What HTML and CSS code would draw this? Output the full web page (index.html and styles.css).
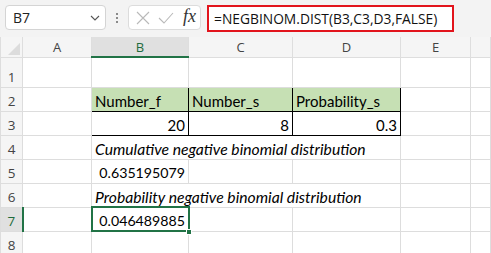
FILE: index.html
```html
<!DOCTYPE html>
<html lang="en">
<head>
    <meta charset="UTF-8">
    <title>NEGBINOM.DIST</title>
    <link rel="stylesheet" href="styles.css">
</head>
<body>
    <div class="formula-bar">
        <div class="name-box">
            <span class="cell-ref">B7</span>
            <svg class="chevron" width="10" height="6" viewBox="0 0 10 6"><path d="M1 1 L5 5 L9 1" fill="none" stroke="#555" stroke-width="1.1"/></svg>
        </div>
        <div class="dots"><i></i><i></i><i></i></div>
        <div class="fx-box">
            <svg width="14" height="14" viewBox="0 0 14 14"><path d="M1 1 L13 13 M13 1 L1 13" stroke="#b9b9b9" stroke-width="1.1"/></svg>
            <svg width="16" height="14" viewBox="0 0 16 14"><path d="M1 7 L6 12 L15 2" fill="none" stroke="#b9b9b9" stroke-width="1.1"/></svg>
            <span class="fx">fx</span>
        </div>
        <div class="formula">=NEGBINOM.DIST(B3,C3,D3,FALSE)</div>
    </div>

    <table class="sheet">
        <colgroup>
            <col style="width:22px"><col style="width:69px"><col style="width:97px">
            <col style="width:104px"><col style="width:108px"><col style="width:70px"><col>
        </colgroup>
        <tr class="col-head">
            <th class="corner"><span class="tri"></span></th>
            <th>A</th><th class="active">B</th><th>C</th><th>D</th><th>E</th><th></th>
        </tr>
        <tr class="tall">
            <th class="row-head">1</th><td></td><td></td><td></td><td></td><td></td><td></td>
        </tr>
        <tr>
            <th class="row-head">2</th><td></td>
            <td class="box head">Number_f</td><td class="box head">Number_s</td><td class="box head">Probability_s</td>
            <td></td><td></td>
        </tr>
        <tr>
            <th class="row-head">3</th><td></td>
            <td class="box num">20</td><td class="box num">8</td><td class="box num">0.3</td>
            <td></td><td></td>
        </tr>
        <tr>
            <th class="row-head">4</th><td></td>
            <td colspan="3" class="note">Cumulative negative binomial distribution</td>
            <td></td><td></td>
        </tr>
        <tr>
            <th class="row-head">5</th><td></td><td class="num result">0.635195079</td><td></td><td></td><td></td><td></td>
        </tr>
        <tr>
            <th class="row-head">6</th><td></td>
            <td colspan="3" class="note">Probability negative binomial distribution</td>
            <td></td><td></td>
        </tr>
        <tr>
            <th class="row-head active">7</th><td></td>
            <td class="num result selected">0.046489885<span class="handle"></span></td>
            <td></td><td></td><td></td><td></td>
        </tr>
        <tr>
            <th class="row-head">8</th><td></td><td></td><td></td><td></td><td></td><td></td>
        </tr>
    </table>
</body>
</html>
```

FILE: styles.css
```css
* {
    margin: 0;
    padding: 0;
    box-sizing: border-box;
}

body {
    width: 491px;
    height: 253px;
    overflow: hidden;
    background: #ffffff;
    font-family: 'Lato', 'Liberation Sans', sans-serif;
    color: #000000;
}

/* formula bar */
.formula-bar {
    height: 37px;
    background: #f3f3f3;
    display: flex;
    align-items: flex-start;
    padding: 5px 0 0 5px;
}

.name-box {
    width: 101px;
    height: 25px;
    background: #fff;
    border: 1px solid #d4d4d4;
    border-radius: 4px;
    display: flex;
    align-items: center;
    justify-content: space-between;
    padding: 0 5px 0 7px;
    font-family: 'Open Sans', sans-serif;
    font-size: 14px;
    color: #222;
}

.dots {
    width: 22px;
    height: 25px;
    display: flex;
    flex-direction: column;
    align-items: center;
    justify-content: center;
    gap: 2px;
}

.dots i {
    width: 2px;
    height: 2px;
    background: #8a8a8a;
}

.fx-box {
    width: 73px;
    height: 25px;
    background: #fff;
    border: 1px solid #dcdcdc;
    border-radius: 4px;
    display: flex;
    align-items: center;
    gap: 8px;
    padding-left: 7px;
}

.fx {
    font-family: 'Liberation Serif', serif;
    font-style: italic;
    font-size: 18px;
    color: #333;
    margin-left: 1px;
    margin-top: -2px;
}

.formula {
    margin-left: 6px;
    width: 247px;
    height: 27px;
    border: 2px solid #e2141c;
    background: #fff;
    font-family: 'Open Sans', sans-serif;
    font-size: 13.8px;
    line-height: 23px;
    padding-left: 5px;
    color: #111;
    white-space: nowrap;
}

/* grid */
.sheet {
    border-collapse: collapse;
    table-layout: fixed;
    width: 491px;
    font-size: 15px;
}

.sheet td,
.sheet th {
    border: 1px solid #dddddd;
    height: 24px;
    padding: 0 3px;
    white-space: nowrap;
    overflow: visible;
}

.col-head th {
    height: 20px;
    background: #f5f5f5;
    font-family: 'Open Sans', sans-serif;
    font-weight: normal;
    font-size: 13px;
    color: #444;
    border-top: none;
    border-color: #dedede;
}

.col-head th.active {
    background: #e0e0e0;
    color: #1e6b3c;
    border-bottom: 2px solid #217346;
}

.corner {
    position: relative;
}

.tri {
    position: absolute;
    right: 2px;
    bottom: 2px;
    width: 0;
    height: 0;
    border-left: 12px solid transparent;
    border-bottom: 12px solid #dcdcdc;
}

.tall td,
.tall th {
    height: 30px;
}

.row-head {
    background: #f5f5f5;
    font-family: 'Open Sans', sans-serif;
    font-weight: normal;
    font-size: 13.5px;
    color: #444;
    text-align: center;
    padding: 0 !important;
    vertical-align: bottom;
    line-height: 20px;
}

.sheet td {
    vertical-align: bottom;
    line-height: 20px;
}

.row-head.active {
    background: #e0e0e0;
    color: #1e6b3c;
    border-right: 2px solid #217346;
}

.sheet td.box {
    border: 1px solid #000;
}

.head {
    background: #c6e0b4;
}

.num {
    text-align: right;
}

.result {
    font-size: 14.2px;
}

.note {
    font-style: italic;
    font-size: 15.7px;
}

.selected {
    position: relative;
    outline: 2px solid #217346;
    outline-offset: -1px;
}

.handle {
    position: absolute;
    right: -4px;
    bottom: -4px;
    width: 6px;
    height: 6px;
    background: #217346;
    border: 1px solid #fff;
}
```
